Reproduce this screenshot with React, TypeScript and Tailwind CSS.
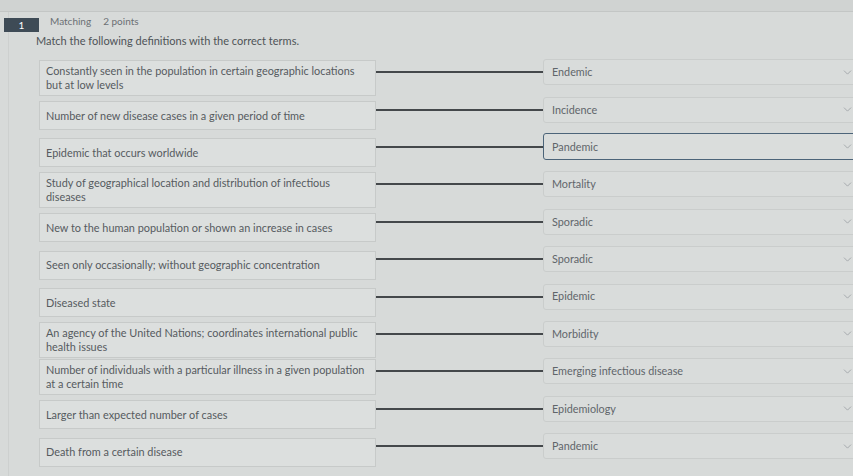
import { ChevronDown } from 'lucide-react';

const rows = [
  {
    definition: [
      'Constantly seen in the population in certain geographic locations',
      'but at low levels',
    ],
    term: 'Endemic',
  },
  { definition: ['Number of new disease cases in a given period of time'], term: 'Incidence' },
  { definition: ['Epidemic that occurs worldwide'], term: 'Pandemic', focused: true },
  {
    definition: ['Study of geographical location and distribution of infectious', 'diseases'],
    term: 'Mortality',
  },
  {
    definition: ['New to the human population or shown an increase in cases'],
    term: 'Sporadic',
  },
  {
    definition: ['Seen only occasionally; without geographic concentration'],
    term: 'Sporadic',
  },
  { definition: ['Diseased state'], term: 'Epidemic' },
  {
    definition: [
      'An agency of the United Nations; coordinates international public',
      'health issues',
    ],
    term: 'Morbidity',
  },
  {
    definition: [
      'Number of individuals with a particular illness in a given population',
      'at a certain time',
    ],
    term: 'Emerging infectious disease',
  },
  { definition: ['Larger than expected number of cases'], term: 'Epidemiology' },
  { definition: ['Death from a certain disease'], term: 'Pandemic' },
];

export default function App() {
  return (
    <div
      className="w-[853px] h-[476px] overflow-hidden bg-[#d7dad9] text-[#565b5f]"
      style={{ fontFamily: 'Lato, "Open Sans", sans-serif' }}
    >
      <div className="h-[12px] bg-[#d0d3d2] border-b border-[#c3c6c5]" />
      <div className="flex h-[472px]">
        <div className="w-[9px] border-r border-[#cdd0cf]" />
        <div className="flex-1">
          <div className="flex items-center h-[21px] -ml-[5px] pt-[5px]">
            <div className="w-[35px] h-[14px] bg-[#3e4b56] flex items-center justify-center text-white text-[10px] leading-none">
              1
            </div>
            <span className="ml-[11px] -mt-[8px] text-[10px] text-[#6b7074]">Matching</span>
            <span className="ml-[12px] -mt-[8px] text-[10px] text-[#6b7074]">2 points</span>
          </div>
          <p className="ml-[27px] text-[11px] text-[#4e5357]">
            Match the following definitions with the correct terms.
          </p>
          <div className="mt-[10px] ml-[30px]">
            {rows.map((row, i) => (
              <div key={i} className="flex items-center h-[37.4px]">
                <div className="w-[337px] min-h-[29px] flex flex-col justify-center shrink-0 bg-[#dcdfde] border border-[#c7cac9] px-[6px] py-[3px] text-[10.9px] leading-[14px] whitespace-nowrap">
                  {row.definition.map((line, j) => (
                    <span key={j}>{line}</span>
                  ))}
                </div>
                <div className="flex items-center mb-[12px] flex-1">
                  <div className="w-[167px] border-t-2 border-[#44484b] shrink-0" />
                  <div
                    className={
                      row.focused
                        ? 'flex-1 h-[27px] flex items-center justify-between pl-[8px] pr-[4px] rounded-[3px] border border-[#4c6479] bg-[#dadddc] text-[10.8px] text-[#60656a] mr-[-6px]'
                        : 'flex-1 h-[26px] flex items-center justify-between pl-[8px] pr-[4px] rounded-[3px] border border-[#cacdcc] bg-[#d9dcdb] text-[10.8px] text-[#60656a] mr-[-6px]'
                    }
                  >
                    <span>{row.term}</span>
                    <ChevronDown className="w-[13px] h-[13px] text-[#9a9fa3]" strokeWidth={1.5} />
                  </div>
                </div>
              </div>
            ))}
          </div>
        </div>
      </div>
    </div>
  );
}
